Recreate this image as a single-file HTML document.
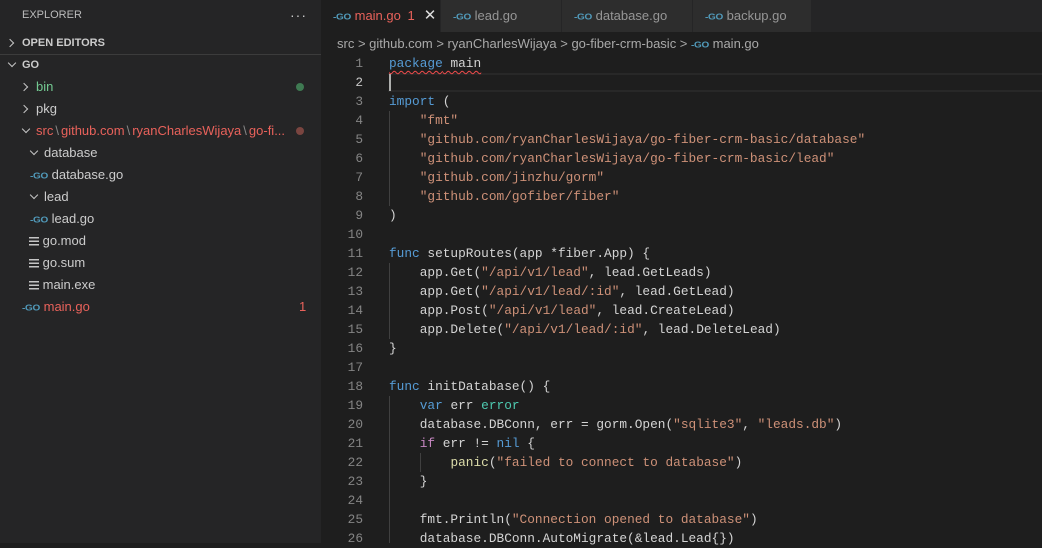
<!DOCTYPE html>
<html><head><meta charset="utf-8"><style>
*{margin:0;padding:0;box-sizing:border-box}
body{width:1042px;height:543px;overflow:hidden;background:#1e1e1e;font-family:"Liberation Sans",sans-serif;position:relative}
.side{position:absolute;left:0;top:0;width:321px;height:543px;background:#252526}
.row{position:absolute;left:0;width:321px;height:22px;line-height:22px;font-size:13px;color:#cccccc;white-space:nowrap}
.chev{position:absolute;width:6px;height:6px;border-right:1.3px solid #c5c5c5;border-bottom:1.3px solid #c5c5c5}
.r{transform:rotate(-45deg)}.d{transform:rotate(45deg)}
.go{color:#519aba;font-weight:900;font-size:10px;letter-spacing:-0.3px;display:inline-block;transform:scaleY(0.85)}
.lines{display:inline-block;width:10px;height:9px;vertical-align:-1px;background:linear-gradient(#c5c5c5 0 1.5px,transparent 1.5px 3.5px,#c5c5c5 3.5px 5px,transparent 5px 7px,#c5c5c5 7px 8.5px,transparent 8.5px);}
.tabbar{position:absolute;left:321px;top:0;width:721px;height:32px;background:#252526}
.tab{position:absolute;top:0;height:32px;line-height:32px;font-size:13px;color:#969696;background:#2d2d2d;padding-left:12px;white-space:nowrap}
.ln{position:absolute;left:321px;width:42px;text-align:right;height:19px;line-height:19px;color:#858585;font-family:"Liberation Mono",monospace;font-size:12.8px}
.cl{position:absolute;left:389px;height:19px;line-height:19px;white-space:pre;font-family:"Liberation Mono",monospace;font-size:12.8px;color:#d4d4d4}
.k{color:#569cd6}.s{color:#ce9178}.t{color:#4ec9b0}.c{color:#c586c0}.f{color:#dcdcaa}
.g{position:absolute;width:1px;background:#404040}
.sep{color:#888;margin:0 2px}
</style></head><body>
<div class="side">
  <div class="row" style="top:4px;left:22px;font-size:11px;color:#bbbbbb">EXPLORER</div>
  <div style="position:absolute;left:290px;top:4px;color:#ccc;font-size:14px;line-height:22px;letter-spacing:1px">···</div>
  <div class="row" style="top:32px"><span class="chev r" style="left:7px;top:8px"></span><span style="position:absolute;left:22px;font-size:11px;font-weight:bold">OPEN EDITORS</span></div>
  <div style="position:absolute;left:0;top:54px;width:321px;height:1px;background:#3c3c3c"></div>
  <div class="row" style="top:54px"><span class="chev d" style="left:9px;top:6px"></span><span style="position:absolute;left:22px;font-size:11px;font-weight:bold">GO</span></div>
  <div class="row" style="top:76px"><span class="chev r" style="left:21px;top:8px"></span><span style="position:absolute;left:36px;color:#73c991">bin</span><span style="position:absolute;left:296px;top:7px;width:8px;height:8px;border-radius:4px;background:#3f7a52"></span></div>
  <div class="row" style="top:98px"><span class="chev r" style="left:21px;top:8px"></span><span style="position:absolute;left:36px">pkg</span></div>
  <div class="row" style="top:120px"><span class="chev d" style="left:23px;top:6px"></span><span style="position:absolute;left:36px;color:#e9625b">src<span class="sep">\</span>github.com<span class="sep">\</span>ryanCharlesWijaya<span class="sep">\</span>go-fi...</span><span style="position:absolute;left:296px;top:7px;width:8px;height:8px;border-radius:4px;background:#7a4540"></span></div>
  <div class="row" style="top:142px"><span class="chev d" style="left:31px;top:6px"></span><span style="position:absolute;left:44px">database</span></div>
  <div class="row" style="top:164px"><span style="position:absolute;left:30px"><span class="go">-GO</span> database.go</span></div>
  <div class="row" style="top:186px"><span class="chev d" style="left:31px;top:6px"></span><span style="position:absolute;left:44px">lead</span></div>
  <div class="row" style="top:208px"><span style="position:absolute;left:30px"><span class="go">-GO</span> lead.go</span></div>
  <div class="row" style="top:230px"><span style="position:absolute;left:29px"><span class="lines"></span> go.mod</span></div>
  <div class="row" style="top:252px"><span style="position:absolute;left:29px"><span class="lines"></span> go.sum</span></div>
  <div class="row" style="top:274px"><span style="position:absolute;left:29px"><span class="lines"></span> main.exe</span></div>
  <div class="row" style="top:296px;color:#e9625b"><span style="position:absolute;left:22px"><span class="go">-GO</span> main.go</span><span style="position:absolute;left:299px">1</span></div>
</div>
<div class="tabbar">
  <div class="tab" style="left:0;width:119px;background:#1e1e1e;color:#e9625b;padding-left:12px"><span class="go">-GO</span> main.go <span style="margin-left:3px">1</span><span style="color:#ddd;margin-left:9px;font-size:15px">✕</span></div>
  <div class="tab" style="left:120px;width:120px"><span class="go">-GO</span> lead.go</div>
  <div class="tab" style="left:241px;width:130px"><span class="go">-GO</span> database.go</div>
  <div class="tab" style="left:372px;width:118px"><span class="go">-GO</span> backup.go</div>
</div>
<div style="position:absolute;left:337px;top:33px;height:22px;line-height:22px;font-size:13px;color:#a9a9a9;white-space:nowrap">src &gt; github.com &gt; ryanCharlesWijaya &gt; go-fiber-crm-basic &gt; <span class="go">-GO</span> main.go</div>
<div style="position:absolute;left:388px;top:73px;width:654px;height:19px;border-top:2px solid #282828;border-bottom:2px solid #282828"></div>
<div style="position:absolute;left:389px;top:74px;width:2px;height:17px;background:#aeafad"></div>
<div class="g" style="left:389px;top:111px;height:95px"></div>
<div class="g" style="left:389px;top:263px;height:76px"></div>
<div class="g" style="left:389px;top:396px;height:147px"></div>
<div class="g" style="left:420px;top:453px;height:19px"></div>
<div class="ln" style="top:54px">1</div><div class="ln" style="top:73px;color:#c6c6c6">2</div>
<div class="ln" style="top:92px">3</div><div class="ln" style="top:111px">4</div><div class="ln" style="top:130px">5</div>
<div class="ln" style="top:149px">6</div><div class="ln" style="top:168px">7</div><div class="ln" style="top:187px">8</div>
<div class="ln" style="top:206px">9</div><div class="ln" style="top:225px">10</div><div class="ln" style="top:244px">11</div>
<div class="ln" style="top:263px">12</div><div class="ln" style="top:282px">13</div><div class="ln" style="top:301px">14</div>
<div class="ln" style="top:320px">15</div><div class="ln" style="top:339px">16</div><div class="ln" style="top:358px">17</div>
<div class="ln" style="top:377px">18</div><div class="ln" style="top:396px">19</div><div class="ln" style="top:415px">20</div>
<div class="ln" style="top:434px">21</div><div class="ln" style="top:453px">22</div><div class="ln" style="top:472px">23</div>
<div class="ln" style="top:491px">24</div><div class="ln" style="top:510px">25</div><div class="ln" style="top:529px">26</div>
<div class="cl" style="top:54px"><span class="k" style="text-decoration:underline wavy #f14c4c;text-decoration-thickness:1px;text-underline-offset:3px">package</span><span style="text-decoration:underline wavy #f14c4c;text-decoration-thickness:1px;text-underline-offset:3px"> main</span></div>
<div class="cl" style="top:92px"><span class="k">import</span> (</div>
<div class="cl" style="top:111px">    <span class="s">"fmt"</span></div>
<div class="cl" style="top:130px">    <span class="s">"github.com/ryanCharlesWijaya/go-fiber-crm-basic/database"</span></div>
<div class="cl" style="top:149px">    <span class="s">"github.com/ryanCharlesWijaya/go-fiber-crm-basic/lead"</span></div>
<div class="cl" style="top:168px">    <span class="s">"github.com/jinzhu/gorm"</span></div>
<div class="cl" style="top:187px">    <span class="s">"github.com/gofiber/fiber"</span></div>
<div class="cl" style="top:206px">)</div>
<div class="cl" style="top:244px"><span class="k">func</span> setupRoutes(app *fiber.App) {</div>
<div class="cl" style="top:263px">    app.Get(<span class="s">"/api/v1/lead"</span>, lead.GetLeads)</div>
<div class="cl" style="top:282px">    app.Get(<span class="s">"/api/v1/lead/:id"</span>, lead.GetLead)</div>
<div class="cl" style="top:301px">    app.Post(<span class="s">"/api/v1/lead"</span>, lead.CreateLead)</div>
<div class="cl" style="top:320px">    app.Delete(<span class="s">"/api/v1/lead/:id"</span>, lead.DeleteLead)</div>
<div class="cl" style="top:339px">}</div>
<div class="cl" style="top:377px"><span class="k">func</span> initDatabase() {</div>
<div class="cl" style="top:396px">    <span class="k">var</span> err <span class="t">error</span></div>
<div class="cl" style="top:415px">    database.DBConn, err = gorm.Open(<span class="s">"sqlite3"</span>, <span class="s">"leads.db"</span>)</div>
<div class="cl" style="top:434px">    <span class="c">if</span> err != <span class="k">nil</span> {</div>
<div class="cl" style="top:453px">        <span class="f">panic</span>(<span class="s">"failed to connect to database"</span>)</div>
<div class="cl" style="top:472px">    }</div>
<div class="cl" style="top:510px">    fmt.Println(<span class="s">"Connection opened to database"</span>)</div>
<div class="cl" style="top:529px">    database.DBConn.AutoMigrate(&amp;lead.Lead{})</div>
</body></html>
